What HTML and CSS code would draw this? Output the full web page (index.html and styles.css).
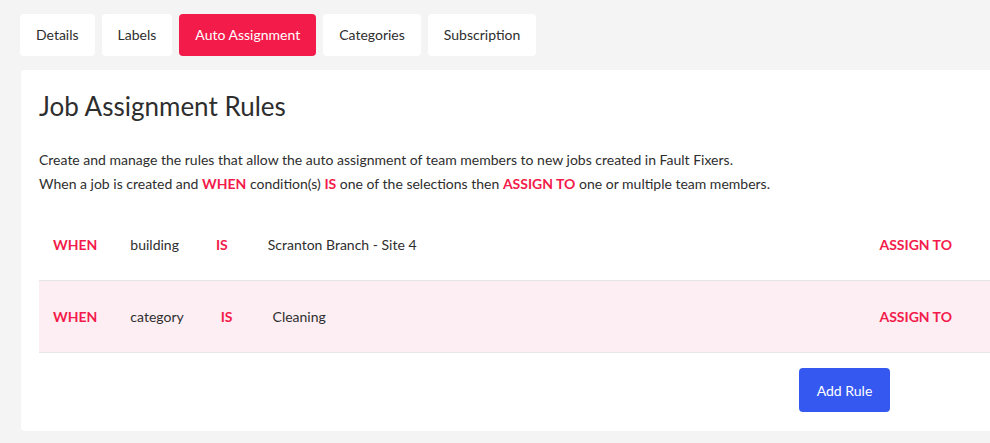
FILE: index.html
```html
<!DOCTYPE html>
<html>
    <head>
        <meta charset="utf-8">
        <title>Job Assignment Rules</title>
        <link rel="stylesheet" href="styles.css">
    </head>
    <body>
        <div class="tabs">
            <a class="tab">Details</a>
            <a class="tab">Labels</a>
            <a class="tab active">Auto Assignment</a>
            <a class="tab">Categories</a>
            <a class="tab">Subscription</a>
        </div>

        <div class="card">
            <h1>Job Assignment Rules</h1>

            <p class="intro">Create and manage the rules that allow the auto assignment of team members to new jobs created in Fault Fixers.<br>
                When a job is created and <span class="key">WHEN</span> condition(s) <span class="key">IS</span> one of the selections then <span class="key">ASSIGN TO</span> one or multiple team members.</p>

            <div class="rules">
                <div class="rule">
                    <span class="key when">WHEN</span>
                    <span class="field">building</span>
                    <span class="key is">IS</span>
                    <span class="value">Scranton Branch - Site 4</span>
                    <span class="key assign">ASSIGN TO</span>
                    <span class="members"></span>
                </div>
                <div class="rule alt">
                    <span class="key when">WHEN</span>
                    <span class="field">category</span>
                    <span class="key is">IS</span>
                    <span class="value">Cleaning</span>
                    <span class="key assign">ASSIGN TO</span>
                    <span class="members"></span>
                </div>
            </div><!-- rules -->

            <div class="actions">
                <button class="btn-primary">Add Rule</button>
            </div>
        </div><!-- card -->
    </body>
</html>
```

FILE: styles.css
```css
html, body {
    margin: 0;
    padding: 0;
    overflow: hidden;
}

body {
    background: #f4f4f4;
    color: #2e2e2e;
    font-family: Lato, "Open Sans", sans-serif;
    font-size: 14px;
    width: 1130px;
}

.tabs {
    display: flex;
    gap: 7px;
    padding: 14px 0 0 20px;
}

.tab {
    background: #ffffff;
    border-radius: 4px;
    color: #2e2e2e;
    height: 42px;
    line-height: 42px;
    padding: 0 16px;
    font-size: 14px;
}

.tab.active {
    background: #f31b4a;
    color: #ffffff;
}

.card {
    background: #ffffff;
    border-radius: 4px;
    margin: 14px 0 0 21px;
    padding: 18px 18px 19px 18px;
    width: 1064px;
}

h1 {
    font-size: 26px;
    font-weight: 400;
    margin: 0;
    line-height: 36px;
    color: #2e2e2e;
}

.intro {
    line-height: 24px;
    margin: 24px 0 0 0;
}

.key {
    color: #f31b4a;
    font-weight: 700;
}

.rules {
    margin-top: 13px;
}

.rule {
    display: flex;
    align-items: center;
    height: 71px;
    padding: 0 14px;
    border-bottom: 1px solid #e6e6e6;
}

.rule.alt {
    background: #fdeef4;
}

.rule > span {
    margin-right: 37px;
}

.rule .when {
    margin-right: 33px;
}

.rule .is {
    margin-right: 40px;
}

.rule .assign {
    margin-left: auto;
    margin-right: 0;
}

.rule .members {
    width: 137px;
    margin-right: 0;
}

.actions {
    display: flex;
    justify-content: flex-end;
    padding: 15px 213px 0 0;
}

.btn-primary {
    background: #3559f0;
    border: 0;
    border-radius: 4px;
    color: #ffffff;
    font-family: inherit;
    font-size: 14px;
    height: 44px;
    width: 91px;
}
```
